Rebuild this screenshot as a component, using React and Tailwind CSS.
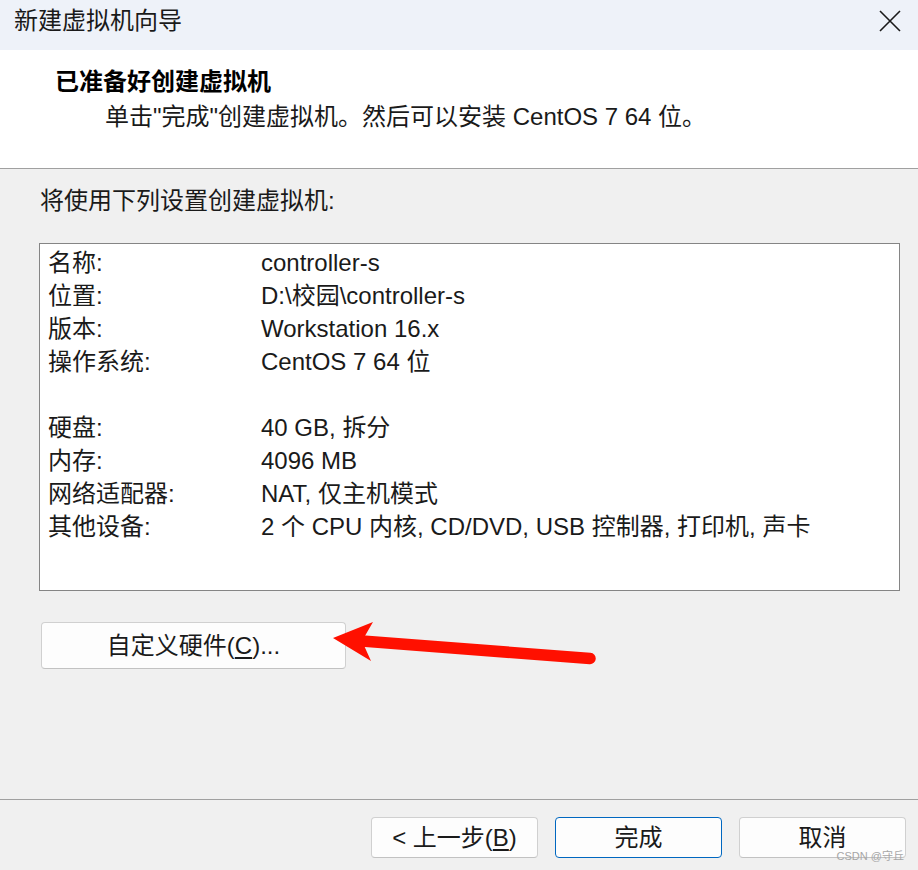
const rows = [
  ["名称:", "controller-s"],
  ["位置:", "D:\\校园\\controller-s"],
  ["版本:", "Workstation 16.x"],
  ["操作系统:", "CentOS 7 64 位"],
  ["", ""],
  ["硬盘:", "40 GB, 拆分"],
  ["内存:", "4096 MB"],
  ["网络适配器:", "NAT, 仅主机模式"],
  ["其他设备:", "2 个 CPU 内核, CD/DVD, USB 控制器, 打印机, 声卡"],
];

function WinButton({ children, primary, className = "" }) {
  return (
    <button
      className={`flex items-center justify-center rounded-[4px] border bg-[#fdfdfd] text-[24px] leading-none text-[#1a1a1a] ${
        primary ? "border-[#0067c0]" : "border-[#d0d0d0] border-b-[#c2c2c2]"
      } ${className}`}
    >
      {children}
    </button>
  );
}

function CloseIcon() {
  return (
    <svg width="22" height="22" viewBox="0 0 22 22" className="mt-[10px]">
      <path d="M1 1 L21 21 M21 1 L1 21" stroke="#1a1a1a" strokeWidth="1.6" fill="none" />
    </svg>
  );
}

function Arrow() {
  return (
    <svg
      className="pointer-events-none absolute left-0 top-0"
      width="918"
      height="870"
      viewBox="0 0 918 870"
    >
      <line
        x1="362"
        y1="641"
        x2="590"
        y2="658.5"
        stroke="#ff1000"
        strokeWidth="11.5"
        strokeLinecap="round"
      />
      <polygon points="333,638 373,622 362,641 371,661" fill="#ff1000" />
    </svg>
  );
}

export default function App() {
  return (
    <div
      className="relative flex h-[870px] w-[918px] flex-col overflow-hidden bg-[#f0f0f0] text-[#1a1a1a]"
      style={{ fontFamily: '"Liberation Sans", "Noto Sans CJK SC", sans-serif' }}
    >
      <div className="flex h-[50px] shrink-0 items-start justify-between bg-[#eef2f9] pl-[14px] pr-[17px]">
        <span className="text-[24px] leading-[42px]">新建虚拟机向导</span>
        <CloseIcon />
      </div>

      <div className="h-[119px] shrink-0 border-b border-[#a0a0a0] bg-white pt-[16px]">
        <div className="pl-[55px] text-[24px] font-bold leading-[32px] text-black">
          已准备好创建虚拟机
        </div>
        <div className="mt-[3px] pl-[105px] text-[24px] leading-[32px]">
          单击"完成"创建虚拟机。然后可以安装 CentOS 7 64 位。
        </div>
      </div>

      <div className="h-[630px] shrink-0 pt-[16px]">
        <div className="pl-[40px] text-[24px] leading-[32px]">将使用下列设置创建虚拟机:</div>

        <div className="ml-[39px] mt-[26px] h-[348px] w-[861px] border border-[#858585] bg-white pt-[2px]">
          {rows.map(([label, value], i) => (
            <div key={i} className="flex h-[33px] text-[24px] leading-[33px]">
              <span className="w-[221px] shrink-0 pl-[8px]">{label}</span>
              <span>{value}</span>
            </div>
          ))}
        </div>

        <WinButton className="ml-[41px] mt-[31px] h-[47px] w-[305px]">
          自定义硬件(<span className="underline underline-offset-[3px]">C</span>)...
        </WinButton>
      </div>

      <div className="flex flex-1 justify-end gap-[17px] border-t border-[#a0a0a0] pr-[12px] pt-[17px]">
        <WinButton className="h-[41px] w-[167px]">
          &lt; 上一步(<span className="underline underline-offset-[3px]">B</span>)
        </WinButton>
        <WinButton primary className="h-[41px] w-[167px]">
          完成
        </WinButton>
        <WinButton className="h-[41px] w-[167px]">取消</WinButton>
      </div>

      <Arrow />

      <span className="absolute bottom-[8px] right-[14px] text-[11px] leading-none text-[#a6a6a6]">
        CSDN @守丘
      </span>
    </div>
  );
}
